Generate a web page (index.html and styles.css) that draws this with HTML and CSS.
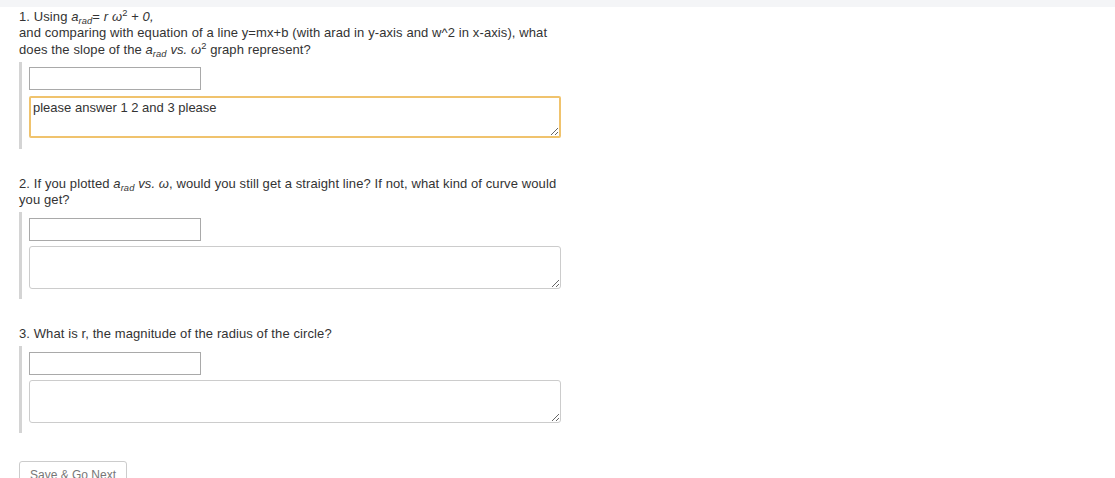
FILE: index.html
```html
<!DOCTYPE html>
<html lang="en">
<head>
    <meta charset="UTF-8">
    <meta name="viewport" content="width=device-width, initial-scale=1.0">
    <title>Assignment</title>
    <link rel="stylesheet" href="styles.css">
</head>
<body>
    <div class="topbar"></div>

    <div class="assignment">
        <div class="question">
            <div class="question-text">
                1. Using <i>a<sub>rad</sub></i>= <i>r ω</i><sup>2</sup> + <i>0,</i><br>
                and comparing with equation of a line y=mx+b (with arad in y-axis and w^2 in x-axis), what does the slope of the <i>a<sub>rad</sub> vs. ω</i><sup>2</sup> graph represent?
            </div>
            <div class="answer">
                <input type="text" class="answer-value">
                <textarea class="answer-work is-active">please answer 1 2 and 3 please</textarea>
            </div>
        </div>

        <div class="question">
            <div class="question-text">
                2. If you plotted <i>a<sub>rad</sub> vs. ω</i>, would you still get a straight line? If not, what kind of curve would you get?
            </div>
            <div class="answer">
                <input type="text" class="answer-value">
                <textarea class="answer-work"></textarea>
            </div>
        </div>

        <div class="question">
            <div class="question-text">
                3. What is r, the magnitude of the radius of the circle?
            </div>
            <div class="answer">
                <input type="text" class="answer-value">
                <textarea class="answer-work"></textarea>
            </div>
        </div>

        <button type="button" class="btn-save">Save &amp; Go Next</button>
    </div>
</body>
</html>
```

FILE: styles.css
```css
body {
    margin: 0;
    font-family: 'Liberation Sans', Arial, Helvetica, sans-serif;
    font-size: 13px;
    color: #333;
    background-color: #fff;
}

.topbar {
    height: 7px;
    background-color: #f4f5f7;
}

.assignment {
    width: 542px;
    padding: 1.5px 0 0 19px;
}

.question + .question {
    margin-top: 27px;
}

.question-text {
    line-height: 16.5px;
    letter-spacing: 0.1px;
}

.question-text sub,
.question-text sup {
    font-size: 72%;
    line-height: 0;
}

.question-text sub {
    vertical-align: -2.5px;
}

.answer {
    display: flex;
    flex-direction: column;
    align-items: flex-start;
    gap: 5.5px;
    margin-top: 3.5px;
    padding: 5.5px 0 10.5px 7px;
    border-left: 3px solid #d4d4d4;
}

.answer-value {
    box-sizing: border-box;
    width: 172px;
    height: 23px;
    margin: 0;
    padding: 2px 4px;
    border: 1px solid #a9a9a9;
    font: inherit;
    color: #333;
}

.answer-work {
    display: block;
    box-sizing: border-box;
    width: 532px;
    height: 42.5px;
    margin: 0;
    padding: 2px;
    border: 1px solid #ccc;
    border-radius: 3px;
    font: inherit;
    color: #333;
    resize: vertical;
}

.answer-work.is-active {
    border: 2px solid #f0c36d;
    border-radius: 2px;
    outline: none;
}

.btn-save {
    margin-top: 28px;
    padding: 6px 10px;
    border: 1px solid #ccc;
    border-radius: 3px;
    background-color: #fff;
    color: #777;
    font-family: inherit;
    font-size: 12px;
}
```
